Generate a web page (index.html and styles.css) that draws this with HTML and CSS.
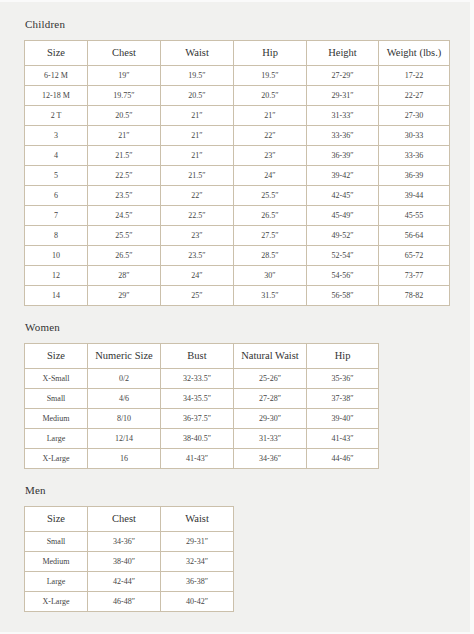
FILE: index.html
```html
<!DOCTYPE html>
<html>
<head>
<meta charset="utf-8">
<link rel="stylesheet" href="styles.css">
</head>
<body>
<div class="page">
  <section class="chart">
    <h2 class="chart-title">Children</h2>
    <table class="size-table t-children">
      <colgroup><col class="col-size"><col class="col-73"><col class="col-73"><col class="col-73"><col class="col-72"><col class="col-71"></colgroup>
      <thead>
        <tr><th>Size</th><th>Chest</th><th>Waist</th><th>Hip</th><th>Height</th><th>Weight (lbs.)</th></tr>
      </thead>
      <tbody>
        <tr><td>6-12 M</td><td>19″</td><td>19.5″</td><td>19.5″</td><td>27-29″</td><td>17-22</td></tr>
        <tr><td>12-18 M</td><td>19.75″</td><td>20.5″</td><td>20.5″</td><td>29-31″</td><td>22-27</td></tr>
        <tr><td>2 T</td><td>20.5″</td><td>21″</td><td>21″</td><td>31-33″</td><td>27-30</td></tr>
        <tr><td>3</td><td>21″</td><td>21″</td><td>22″</td><td>33-36″</td><td>30-33</td></tr>
        <tr><td>4</td><td>21.5″</td><td>21″</td><td>23″</td><td>36-39″</td><td>33-36</td></tr>
        <tr><td>5</td><td>22.5″</td><td>21.5″</td><td>24″</td><td>39-42″</td><td>36-39</td></tr>
        <tr><td>6</td><td>23.5″</td><td>22″</td><td>25.5″</td><td>42-45″</td><td>39-44</td></tr>
        <tr><td>7</td><td>24.5″</td><td>22.5″</td><td>26.5″</td><td>45-49″</td><td>45-55</td></tr>
        <tr><td>8</td><td>25.5″</td><td>23″</td><td>27.5″</td><td>49-52″</td><td>56-64</td></tr>
        <tr><td>10</td><td>26.5″</td><td>23.5″</td><td>28.5″</td><td>52-54″</td><td>65-72</td></tr>
        <tr><td>12</td><td>28″</td><td>24″</td><td>30″</td><td>54-56″</td><td>73-77</td></tr>
        <tr><td>14</td><td>29″</td><td>25″</td><td>31.5″</td><td>56-58″</td><td>78-82</td></tr>
      </tbody>
    </table>
  </section>

  <section class="chart">
    <h2 class="chart-title">Women</h2>
    <table class="size-table t-women">
      <colgroup><col class="col-size"><col class="col-73"><col class="col-73"><col class="col-73"><col class="col-72"></colgroup>
      <thead>
        <tr><th>Size</th><th>Numeric Size</th><th>Bust</th><th>Natural Waist</th><th>Hip</th></tr>
      </thead>
      <tbody>
        <tr><td>X-Small</td><td>0/2</td><td>32-33.5″</td><td>25-26″</td><td>35-36″</td></tr>
        <tr><td>Small</td><td>4/6</td><td>34-35.5″</td><td>27-28″</td><td>37-38″</td></tr>
        <tr><td>Medium</td><td>8/10</td><td>36-37.5″</td><td>29-30″</td><td>39-40″</td></tr>
        <tr><td>Large</td><td>12/14</td><td>38-40.5″</td><td>31-33″</td><td>41-43″</td></tr>
        <tr><td>X-Large</td><td>16</td><td>41-43″</td><td>34-36″</td><td>44-46″</td></tr>
      </tbody>
    </table>
  </section>

  <section class="chart">
    <h2 class="chart-title">Men</h2>
    <table class="size-table t-men">
      <colgroup><col class="col-size"><col class="col-73"><col class="col-73"></colgroup>
      <thead>
        <tr><th>Size</th><th>Chest</th><th>Waist</th></tr>
      </thead>
      <tbody>
        <tr><td>Small</td><td>34-36″</td><td>29-31″</td></tr>
        <tr><td>Medium</td><td>38-40″</td><td>32-34″</td></tr>
        <tr><td>Large</td><td>42-44″</td><td>36-38″</td></tr>
        <tr><td>X-Large</td><td>46-48″</td><td>40-42″</td></tr>
      </tbody>
    </table>
  </section>
</div>
</body>
</html>
```

FILE: styles.css
```css
html, body {
  margin: 0;
  padding: 0;
  background: #fafafa;
}

.page {
  width: 470px;
  height: 630px;
  margin: 2px 2px 2px 0;
  background: #f1f1ef;
  box-sizing: border-box;
  padding: 14px 0 0 24px;
  font-family: "Liberation Serif", "DejaVu Serif", serif;
  color: #333;
}

.chart {
  display: flex;
  flex-direction: column;
  align-items: flex-start;
}

.chart + .chart {
  margin-top: 13px;
}

.chart-title {
  margin: 0 0 8px 1px;
  font-size: 11px;
  font-weight: normal;
  line-height: 16px;
  height: 16px;
  color: #333;
  letter-spacing: 0.2px;
}

.size-table {
  border-collapse: collapse;
  table-layout: fixed;
  background: #fff;
}

.t-children { width: 425px; }
.t-women { width: 354px; }
.t-men { width: 209px; }

.col-size { width: 63px; }
.col-73 { width: 73px; }
.col-72 { width: 72px; }
.col-71 { width: 71px; }

.size-table th,
.size-table td {
  border: 1.5px solid #cbc0ab;
  padding: 0;
  text-align: center;
  line-height: 1;
}

.size-table th {
  height: 24px;
  font-size: 10.5px;
  font-weight: normal;
  color: #333;
}

.size-table td {
  height: 19px;
  font-size: 8px;
  color: #444;
}
```
